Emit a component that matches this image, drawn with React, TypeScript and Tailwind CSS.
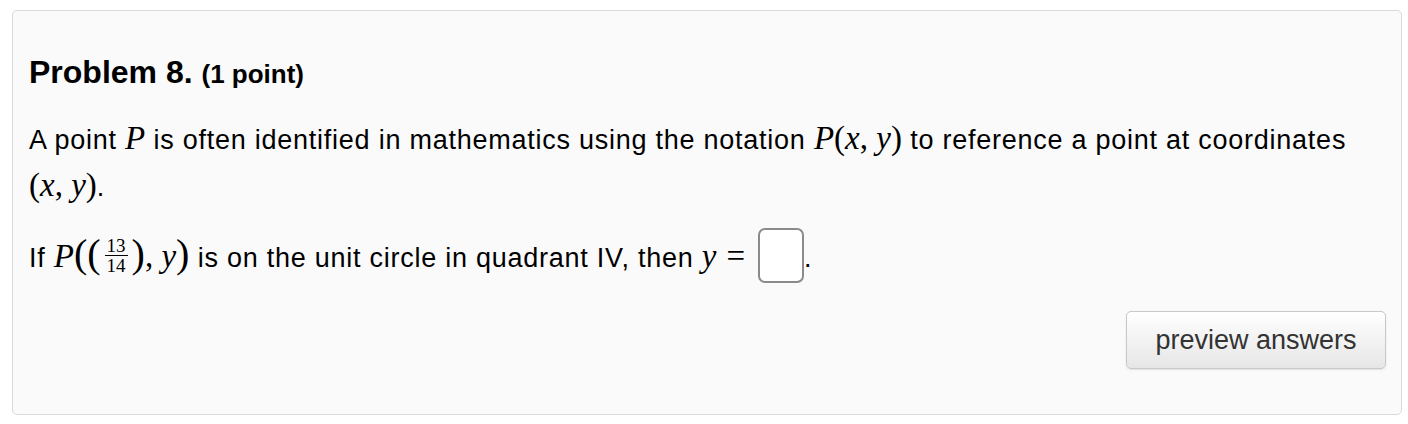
import React from 'react';

const mathFont = { fontFamily: '"Liberation Serif", "DejaVu Serif", serif' };

function V({ children }: { children: React.ReactNode }) {
  return (
    <span className="italic text-[33px] tracking-normal" style={mathFont}>
      {children}
    </span>
  );
}

function R({ children, big = false }: { children: React.ReactNode; big?: boolean }) {
  return (
    <span className={(big ? 'text-[40px] leading-none' : 'text-[33px]') + ' tracking-normal'} style={mathFont}>
      {children}
    </span>
  );
}

function Frac() {
  return (
    <span className="inline-flex flex-col items-center align-[15px] mx-[4px] text-[19px] leading-[17px] tracking-normal" style={mathFont}>
      <span className="px-[2px]">13</span>
      <span className="h-px w-full bg-black my-[1px]" />
      <span className="px-[2px]">14</span>
    </span>
  );
}

export default function App() {
  return (
    <div className="bg-white w-[1408px] h-[424px] pt-[10px] pl-[12px]">
      <div
        className="w-[1390px] h-[405px] border border-[#dadada] rounded-[5px] bg-[#fafafa] pl-4 pr-[15px] text-black"
        style={{ fontFamily: '"Liberation Sans", Arial, sans-serif' }}
      >
        <h2 className="mt-[42px] font-bold text-[32px] leading-[38px]">
          Problem 8. <span className="text-[26px]">(1 point)</span>
        </h2>

        <p className="mt-[23px] text-[27px] tracking-[0.75px] leading-[45px]">
          A point <V>P</V> is often identified in mathematics using the notation{' '}
          <V>P</V><R>(</R><V>x</V><R>, </R><V>y</V><R>)</R> to reference a point at coordinates
          <br />
          <R>(</R><V>x</V><R>, </R><V>y</V><R>)</R>.
        </p>

        <p className="mt-[18px] text-[27px] tracking-[0.75px] leading-[45px]">
          If <V>P</V>
          <R big>(</R>
          <R big>(</R>
          <Frac />
          <R big>)</R>
          <R>, </R>
          <V>y</V>
          <R big>)</R> is on the unit circle in quadrant IV, then <V>y</V>
          <span className="ml-[10px]"><R>=</R></span>
          <span className="inline-block align-[-16px] ml-[13px] w-[46px] h-[55px] border-2 border-[#8a8a8a] rounded-[7px] bg-white" />
          .
        </p>

        <div className="flex justify-end mt-[28px]">
          <button className="w-[260px] h-[58px] rounded-[5px] border border-[#c8c8c8] bg-gradient-to-b from-white to-[#e6e6e6] text-[27px] text-[#333] shadow-[0_1px_2px_rgba(0,0,0,0.1)]">
            preview answers
          </button>
        </div>
      </div>
    </div>
  );
}
